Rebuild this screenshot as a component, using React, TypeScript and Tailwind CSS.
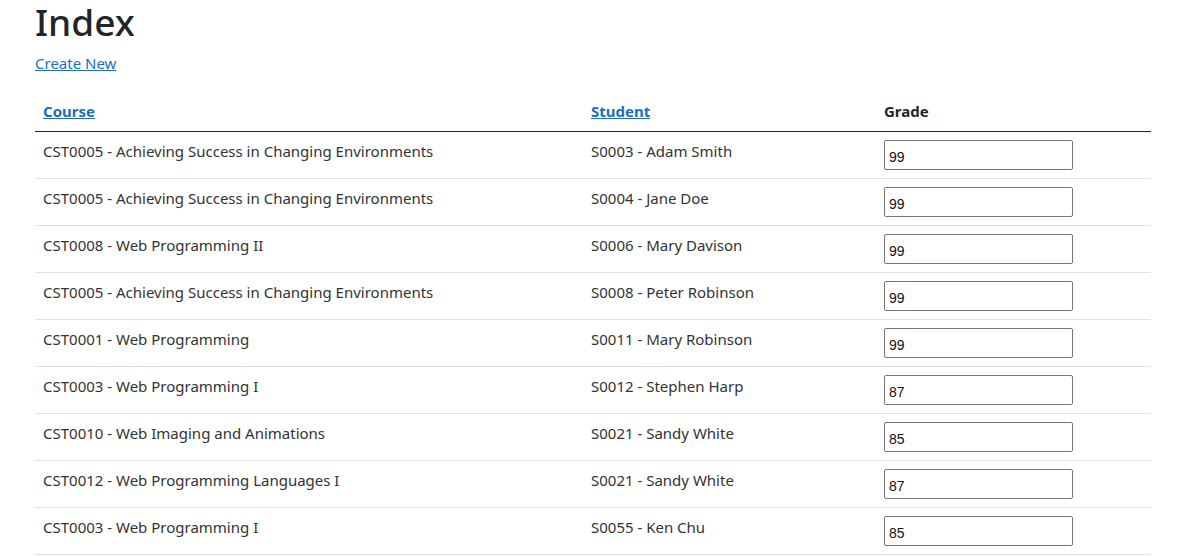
import React from "react";

const rows = [
  { course: "CST0005 - Achieving Success in Changing Environments", student: "S0003 - Adam Smith", grade: "99" },
  { course: "CST0005 - Achieving Success in Changing Environments", student: "S0004 - Jane Doe", grade: "99" },
  { course: "CST0008 - Web Programming II", student: "S0006 - Mary Davison", grade: "99" },
  { course: "CST0005 - Achieving Success in Changing Environments", student: "S0008 - Peter Robinson", grade: "99" },
  { course: "CST0001 - Web Programming", student: "S0011 - Mary Robinson", grade: "99" },
  { course: "CST0003 - Web Programming I", student: "S0012 - Stephen Harp", grade: "87" },
  { course: "CST0010 - Web Imaging and Animations", student: "S0021 - Sandy White", grade: "85" },
  { course: "CST0012 - Web Programming Languages I", student: "S0021 - Sandy White", grade: "87" },
  { course: "CST0003 - Web Programming I", student: "S0055 - Ken Chu", grade: "85" },
];

export default function App() {
  return (
    <div className="min-h-screen bg-white px-[35px] text-[#212529] [font-family:'Noto_Sans',sans-serif]">
      <h1 className="text-[37px] font-medium leading-[44px] pt-0">Index</h1>
      <p className="mt-[8px] text-[15px] leading-[22px]">
        <a href="#" className="text-[#1b6ec2] underline">Create New</a>
      </p>

      <table className="mt-[18px] w-[1116px] border-collapse text-[15px]">
        <thead>
          <tr className="border-b-[1.5px] border-[#212529]">
            <th className="w-[548px] px-2 pt-[8px] pb-[8px] text-left font-bold">
              <a href="#" className="text-[#1b6ec2] underline">Course</a>
            </th>
            <th className="w-[293px] px-2 pt-[8px] pb-[8px] text-left font-bold">
              <a href="#" className="text-[#1b6ec2] underline">Student</a>
            </th>
            <th className="px-2 pt-[8px] pb-[8px] text-left font-bold">Grade</th>
          </tr>
        </thead>
        <tbody>
          {rows.map((r, i) => (
            <tr key={i} className="border-b border-[#dee2e6]">
              <td className="px-2 pt-[8px] pb-[8px] align-top leading-[22px] text-[#333]">{r.course}</td>
              <td className="px-2 pt-[8px] pb-[8px] align-top leading-[22px] text-[#333]">{r.student}</td>
              <td className="px-2 pt-[8px] pb-[8px] align-top">
                <input
                  readOnly
                  value={r.grade}
                  className="block h-[30px] w-[189px] rounded-[2px] border border-[#767676] px-[4px] pt-[4px] text-[14px] text-[#111] [font-family:'Liberation_Sans',Arial,sans-serif]"
                />
              </td>
            </tr>
          ))}
        </tbody>
      </table>
    </div>
  );
}
